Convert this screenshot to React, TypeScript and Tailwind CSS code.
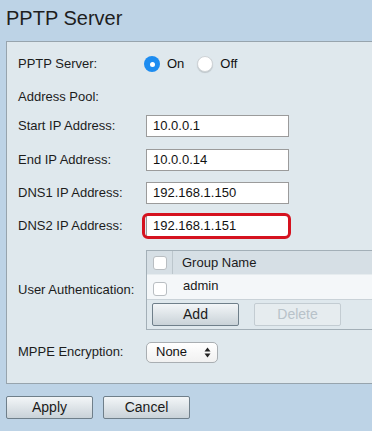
import { ReactNode } from "react";

const FONT = { fontFamily: '"Liberation Sans", Arial, sans-serif' };

function Row({ label, children, className = "" }: { label: string; children?: ReactNode; className?: string }) {
  return (
    <div className={`flex items-center ${className}`}>
      <div className="w-[128px] shrink-0 text-[13px] text-[#1c1c1c]">{label}</div>
      {children}
    </div>
  );
}

function TextBox({ value }: { value: string }) {
  return (
    <div className="flex h-[22px] w-[143px] items-center border border-[#9b9b9b] bg-white pl-[6px] text-[13px] text-[#111]">
      {value}
    </div>
  );
}

function Check() {
  return <div className="h-[14px] w-[14px] rounded-[3px] border border-[#b9bec2] bg-white" />;
}

function Btn({ label, disabled = false, className = "" }: { label: string; disabled?: boolean; className?: string }) {
  return (
    <button
      className={`flex h-[23px] w-[87px] items-center justify-center rounded-[2px] border text-[14px] ${
        disabled
          ? "border-[#c3ccd2] bg-[#e6ecef] text-[#b8c2c9]"
          : "border-[#6f7f8a] bg-gradient-to-b from-[#f3f6f8] to-[#c9d2d8] text-[#1a1a1a]"
      } ${className}`}
    >
      {label}
    </button>
  );
}

export default function App() {
  return (
    <div style={FONT} className="h-[431px] w-[372px] overflow-hidden bg-[#bdd3e6] px-[6px]">
      <h1 className="pt-[6px] text-[20px] leading-[24px] text-[#1e1e1e]">PPTP Server</h1>

      <div className="mt-[11px] w-[420px] border border-[#97a4ad] bg-[#dfe8ed] pt-[10px] pb-[21px] pl-[11px]">
        <Row label="PPTP Server:" className="h-[24px]">
          <div className="-ml-[2px] flex items-center text-[13px] text-[#111]">
            <div className="flex h-[16px] w-[16px] items-center justify-center rounded-full bg-[#1d8cf0]">
              <div className="h-[5px] w-[5px] rounded-full bg-white" />
            </div>
            <span className="ml-[7px]">On</span>
            <div className="ml-[13px] h-[16px] w-[16px] rounded-full border border-[#cfd3d6] bg-white shadow-[0_1px_1px_rgba(0,0,0,0.15)]" />
            <span className="ml-[7px]">Off</span>
          </div>
        </Row>

        <Row label="Address Pool:" className="mt-[9px] h-[24px]" />

        <Row label="Start IP Address:" className="mt-[6px] h-[22px]">
          <TextBox value="10.0.0.1" />
        </Row>
        <Row label="End IP Address:" className="mt-[12px] h-[22px]">
          <TextBox value="10.0.0.14" />
        </Row>
        <Row label="DNS1 IP Address:" className="mt-[11px] h-[22px]">
          <TextBox value="192.168.1.150" />
        </Row>
        <Row label="DNS2 IP Address:" className="mt-[11px] h-[22px]">
          <div className="relative">
            <TextBox value="192.168.1.151" />
            <div className="absolute -top-[2px] -right-[2px] -bottom-[2px] -left-[4px] rounded-[6px] border-[3px] border-[#d5121f]" />
          </div>
        </Row>

        <Row label="User Authentication:" className="mt-[13px]">
          <div className="w-[260px] border border-[#a3afb7] text-[13px] text-[#1a1a1a]">
            <div className="flex h-[23px] items-center bg-[#d6dfe5]">
              <div className="flex h-full w-[26px] items-center justify-center border-r border-[#bcc6cc]">
                <Check />
              </div>
              <span className="ml-[9px]">Group Name</span>
            </div>
            <div className="flex h-[25px] items-center border-t border-[#e6ecef] bg-[#f4f7f9]">
              <div className="flex w-[26px] items-center justify-center pt-[3px]">
                <Check />
              </div>
              <span className="ml-[10px] -mt-[2px]">admin</span>
            </div>
            <div className="flex h-[30px] items-center gap-[15px] border-t border-[#c9d2d8] pl-[5px]">
              <Btn label="Add" />
              <Btn label="Delete" disabled />
            </div>
          </div>
        </Row>

        <Row label="MPPE Encryption:" className="mt-[12px] h-[20px]">
          <div className="flex h-[21px] w-[72px] items-center justify-between rounded-[5px] border border-[#a9aeb2] bg-gradient-to-b from-white to-[#f1f1f1] pr-[6px] pl-[9px] text-[13px] text-[#111]">
            <span>None</span>
            <svg width="7" height="11" viewBox="0 0 7 11">
              <path d="M3.5 0.5 L6.5 4.5 H0.5 Z" fill="#222" />
              <path d="M3.5 10.5 L6.5 6.5 H0.5 Z" fill="#222" />
            </svg>
          </div>
        </Row>
      </div>

      <div className="mt-[12px] flex gap-[10px]">
        <Btn label="Apply" />
        <Btn label="Cancel" />
      </div>
    </div>
  );
}
